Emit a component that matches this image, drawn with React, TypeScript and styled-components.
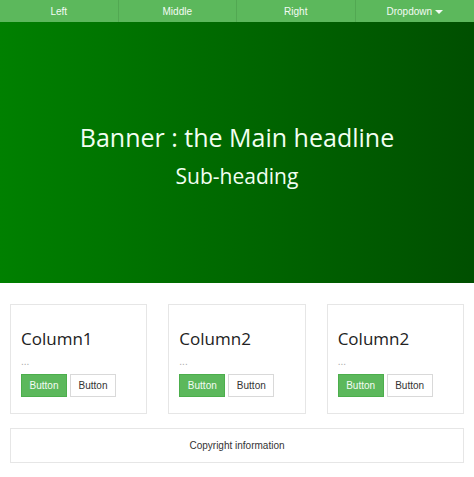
import { FC } from "react";
import styled, { createGlobalStyle } from "styled-components";

const GlobalStyle = createGlobalStyle`
  html, body {
    margin: 0;
    padding: 0;
    background: #fff;
    font-family: "Liberation Sans", Arial, sans-serif;
  }
`;

const NavBar = styled.nav`
  display: grid;
  grid-template-columns: repeat(4, 1fr);
  height: 22px;
  background-color: #5cb85c;
`;

const NavItem = styled.a<{ $last?: boolean }>`
  display: flex;
  align-items: center;
  justify-content: center;
  gap: 3px;
  color: #f4fbf4;
  font-size: 10px;
  text-decoration: none;
  border-right: ${(p) => (p.$last ? "none" : "1px solid #52a852")};
  cursor: pointer;
`;

const Caret = styled.span`
  width: 0;
  height: 0;
  border-left: 4px solid transparent;
  border-right: 4px solid transparent;
  border-top: 4px solid #f4fbf4;
  margin-top: 1px;
`;

const Banner = styled.header`
  height: 261px;
  background: linear-gradient(to right, #008000, #004f00);
  display: flex;
  flex-direction: column;
  align-items: center;
  justify-content: center;
  color: #f2fff2;
  font-family: "Open Sans", "Noto Sans", sans-serif;
  padding-top: 6px;
  box-sizing: border-box;
  .headline {
    font-size: 25px;
    line-height: 30px;
    margin: 0;
    font-weight: 400;
  }
  .sub {
    font-size: 21px;
    line-height: 26px;
    margin: 11px 0 0;
    font-weight: 400;
  }
`;

const Content = styled.main`
  padding: 21px 10px 0;
`;

const Columns = styled.div`
  display: grid;
  grid-template-columns: repeat(3, 1fr);
  column-gap: 21px;
`;

const Card = styled.section`
  border: 1px solid #e6e6e6;
  height: 110px;
  box-sizing: border-box;
  padding: 24px 10px 0;
  .title {
    font-family: "Open Sans", "Noto Sans", sans-serif;
    font-size: 17px;
    line-height: 20px;
    color: #222;
    margin: 0;
    font-weight: 400;
  }
  .dots {
    font-size: 10px;
    line-height: 10px;
    color: #aaa;
    margin: 8px 0 0;
  }
`;

const Buttons = styled.div`
  display: flex;
  gap: 3px;
  margin-top: 7px;
`;

const Button = styled.button<{ $primary?: boolean }>`
  height: 23px;
  width: 46px;
  padding: 0;
  font-family: "Liberation Sans", Arial, sans-serif;
  font-size: 10px;
  border: 1px solid ${(p) => (p.$primary ? "#4cae4c" : "#d9d9d9")};
  background-color: ${(p) => (p.$primary ? "#5cb85c" : "#fff")};
  color: ${(p) => (p.$primary ? "#f4fbf4" : "#333")};
  cursor: pointer;
`;

const Footer = styled.footer`
  margin-top: 14px;
  height: 35px;
  border: 1px solid #e6e6e6;
  box-sizing: border-box;
  display: flex;
  align-items: center;
  justify-content: center;
  font-size: 10px;
  color: #333;
`;

const columns = ["Column1", "Column2", "Column2"];

const App: FC = () => {
  return (
    <>
      <GlobalStyle />
      <NavBar>
        <NavItem>Left</NavItem>
        <NavItem>Middle</NavItem>
        <NavItem>Right</NavItem>
        <NavItem $last>
          Dropdown <Caret />
        </NavItem>
      </NavBar>
      <Banner>
        <h1 className="headline">Banner : the Main headline</h1>
        <h2 className="sub">Sub-heading</h2>
      </Banner>
      <Content>
        <Columns>
          {columns.map((name, i) => (
            <Card key={i}>
              <h3 className="title">{name}</h3>
              <p className="dots">...</p>
              <Buttons>
                <Button $primary>Button</Button>
                <Button>Button</Button>
              </Buttons>
            </Card>
          ))}
        </Columns>
        <Footer>Copyright information</Footer>
      </Content>
    </>
  );
};

export default App;
